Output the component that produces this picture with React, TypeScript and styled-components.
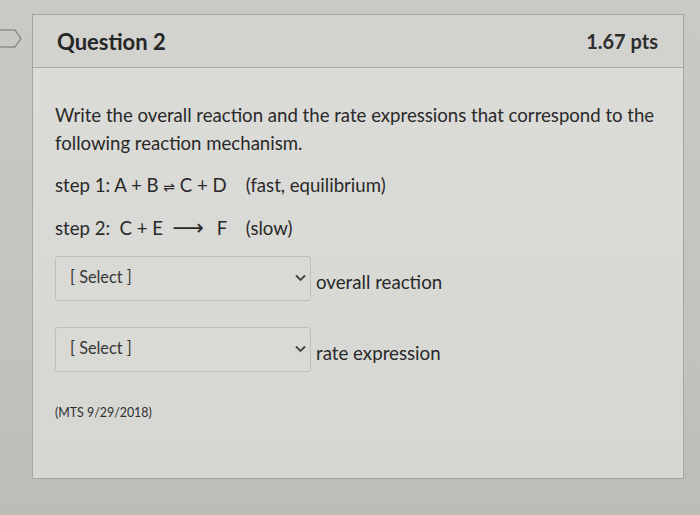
import React from "react";
import styled, { createGlobalStyle } from "styled-components";

const GlobalStyle = createGlobalStyle`
  html, body {
    margin: 0;
    padding: 0;
    width: 700px;
    height: 515px;
    overflow: hidden;
  }
  body {
    font-family: Lato, "Open Sans", "Liberation Sans", sans-serif;
    background: #c4c4c1;
  }
`;

const Page = styled.div`
  width: 700px;
  height: 515px;
  box-sizing: border-box;
  padding-top: 14px;
  display: flex;
  align-items: flex-start;
  background: linear-gradient(180deg, #c9c9c6 0%, #c3c3c0 60%, #bcbcb9 100%);
`;

const MarkerColumn = styled.div`
  width: 32px;
  flex: none;
  padding-top: 15px;
  display: flex;
`;

const Card = styled.section`
  width: 652px;
  height: 465px;
  box-sizing: border-box;
  border: 1px solid #a6a6a3;
  display: flex;
  flex-direction: column;
  background: linear-gradient(180deg, #dcdcd8 0%, #d6d6d3 100%);
`;

const Header = styled.header`
  height: 53px;
  box-sizing: border-box;
  border-bottom: 1px solid #a9a9a6;
  background: #d2d2cf;
  display: flex;
  align-items: center;
  justify-content: space-between;
  padding: 0 25px 0 24px;
  color: #262626;
`;

const Title = styled.h2`
  margin: 0;
  font-size: 22px;
  font-weight: 700;
`;

const Points = styled.span`
  font-size: 20px;
  font-weight: 700;
  color: #2e2e2e;
`;

const Body = styled.div`
  padding: 33px 22px 0 22px;
  color: #292929;
  font-size: 18.6px;
  line-height: 28px;
`;

const Paragraph = styled.p`
  margin: 0;
`;

const StepLine = styled.p<{ $top: number }>`
  margin: ${(p) => p.$top}px 0 0 0;
  white-space: pre;
`;

const Eq = styled.span`
  font-family: "DejaVu Sans", sans-serif;
  font-size: 14px;
`;

const LongArrow = styled.span`
  font-family: "DejaVu Sans", sans-serif;
  font-size: 22px;
  line-height: 0;
  margin-right: 3px;
`;

const SelectRow = styled.div<{ $top: number }>`
  margin-top: ${(p) => p.$top}px;
  display: flex;
  align-items: center;
  gap: 5px;
`;

const SelectBox = styled.div`
  width: 256px;
  height: 45px;
  box-sizing: border-box;
  border: 1px solid #bebebb;
  border-radius: 3px;
  background: #d9d9d6;
  display: flex;
  align-items: center;
  justify-content: space-between;
  padding: 0 4px 4px 14px;
  font-size: 16.3px;
  color: #363636;
`;

const Chevron = styled.svg`
  width: 11px;
  height: 8px;
  margin-top: 3px;
`;

const Label = styled.span`
  font-size: 18.7px;
  color: #292929;
  margin-top: 6px;
`;

const Note = styled.p`
  margin: 33px 0 0 0;
  font-size: 12.4px;
  line-height: 16px;
  color: #2e2e2e;
`;

const TabMarker = () => (
  <svg width="24" height="20" viewBox="0 0 24 20">
    <path d="M-1 1 H15 L21 9.5 L15 18 H-1" fill="none" stroke="#8d8d8a" strokeWidth="1.4" />
  </svg>
);

const Select = () => (
  <SelectBox>
    <span>[ Select ]</span>
    <Chevron viewBox="0 0 11 8">
      <path d="M1 1.5 L5.5 6 L10 1.5" fill="none" stroke="#444" strokeWidth="1.9" />
    </Chevron>
  </SelectBox>
);

export default function App() {
  return (
    <>
      <GlobalStyle />
      <Page>
        <MarkerColumn>
          <TabMarker />
        </MarkerColumn>
        <Card>
          <Header>
            <Title>Question 2</Title>
            <Points>1.67 pts</Points>
          </Header>
          <Body>
            <Paragraph>
              Write the overall reaction and the rate expressions that correspond to the following
              reaction mechanism.
            </Paragraph>
            <StepLine $top={14}>
              step 1: A + B <Eq>⇌</Eq> C + D{"    "}(fast, equilibrium)
            </StepLine>
            <StepLine $top={13}>
              step 2:  C + E  <LongArrow>⟶</LongArrow>  F    (slow)
            </StepLine>
            <SelectRow $top={14}>
              <Select />
              <Label>overall reaction</Label>
            </SelectRow>
            <SelectRow $top={26}>
              <Select />
              <Label>rate expression</Label>
            </SelectRow>
            <Note>(MTS 9/29/2018)</Note>
          </Body>
        </Card>
      </Page>
    </>
  );
}
